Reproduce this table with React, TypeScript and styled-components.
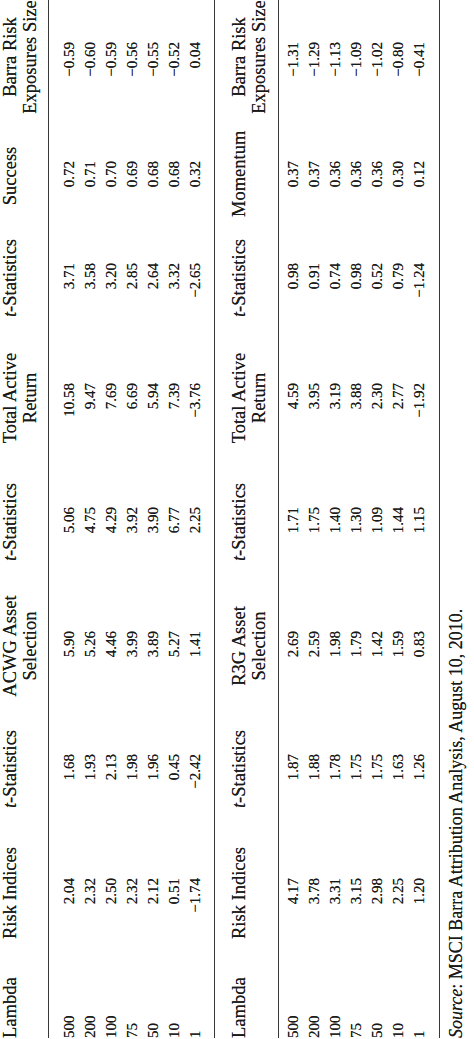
import React from "react";
import styled, { createGlobalStyle } from "styled-components";

const GlobalStyle = createGlobalStyle`
  html, body {
    margin: 0;
    padding: 0;
    background: #fff;
  }
`;

const Page = styled.div`
  width: 474px;
  height: 1039px;
  overflow: hidden;
  background: #fff;
`;

// the printed table sits sideways on the page: lay it out upright, then turn it
const Sheet = styled.div`
  width: 1080px;
  transform-origin: 0 0;
  transform: translate(-2px, 1038px) rotate(-90deg);
  font-family: "Liberation Serif", "Times New Roman", serif;
  color: #1a1a1a;
  text-shadow: 0 0 0.4px #444;
`;

const COLS = "85px 120px 128px 118px 130px 118px 122px 82px 156px";

const Band = styled.div<{ $top: number; $bottom: number }>`
  display: grid;
  grid-template-columns: ${COLS};
  grid-auto-rows: auto;
  padding: ${(p) => p.$top}px 0 ${(p) => p.$bottom}px;
  border-bottom: 1.5px solid #383838;
`;

const Head = styled.div<{ $left?: boolean }>`
  font-size: 18.5px;
  line-height: 20px;
  white-space: nowrap;
  text-align: ${(p) => (p.$left ? "left" : "center")};
`;

const Cell = styled.div<{ $left?: boolean }>`
  font-size: 15px;
  line-height: 21px;
  white-space: nowrap;
  display: flex;
  justify-content: ${(p) => (p.$left ? "flex-start" : "center")};
`;

const Num = styled.span`
  display: flex;
  justify-content: flex-end;
  width: 30px;
`;

const Source = styled.p`
  margin: 0;
  padding-top: 5px;
  font-size: 18px;
  line-height: 22px;
  white-space: nowrap;
`;

const TStat = () => (
  <>
    <i>t</i>-Statistics
  </>
);

type Row = [string, ...string[]];

const panelOne: Row[] = [
  ["500", "2.04", "1.68", "5.90", "5.06", "10.58", "3.71", "0.72", "−0.59"],
  ["200", "2.32", "1.93", "5.26", "4.75", "9.47", "3.58", "0.71", "−0.60"],
  ["100", "2.50", "2.13", "4.46", "4.29", "7.69", "3.20", "0.70", "−0.59"],
  ["75", "2.32", "1.98", "3.99", "3.92", "6.69", "2.85", "0.69", "−0.56"],
  ["50", "2.12", "1.96", "3.89", "3.90", "5.94", "2.64", "0.68", "−0.55"],
  ["10", "0.51", "0.45", "5.27", "6.77", "7.39", "3.32", "0.68", "−0.52"],
  ["1", "−1.74", "−2.42", "1.41", "2.25", "−3.76", "−2.65", "0.32", "0.04"],
];

const panelTwo: Row[] = [
  ["500", "4.17", "1.87", "2.69", "1.71", "4.59", "0.98", "0.37", "−1.31"],
  ["200", "3.78", "1.88", "2.59", "1.75", "3.95", "0.91", "0.37", "−1.29"],
  ["100", "3.31", "1.78", "1.98", "1.40", "3.19", "0.74", "0.36", "−1.13"],
  ["75", "3.15", "1.75", "1.79", "1.30", "3.88", "0.98", "0.36", "−1.09"],
  ["50", "2.98", "1.75", "1.42", "1.09", "2.30", "0.52", "0.36", "−1.02"],
  ["10", "2.25", "1.63", "1.59", "1.44", "2.77", "0.79", "0.30", "−0.80"],
  ["1", "1.20", "1.26", "0.83", "1.15", "−1.92", "−1.24", "0.12", "−0.41"],
];

const Header = ({
  selection,
  factor,
  top,
  bottom,
}: {
  selection: string;
  factor: string;
  top: number;
  bottom: number;
}) => (
  <Band $top={top} $bottom={bottom}>
    <Head $left>Lambda</Head>
    <Head>Risk Indices</Head>
    <Head>
      <TStat />
    </Head>
    <Head>
      {selection} Asset
      <br />
      Selection
    </Head>
    <Head>
      <TStat />
    </Head>
    <Head>
      Total Active
      <br />
      Return
    </Head>
    <Head>
      <TStat />
    </Head>
    <Head>{factor}</Head>
    <Head>
      Barra Risk
      <br />
      Exposures Size
    </Head>
  </Band>
);

const Body = ({ rows, top, bottom }: { rows: Row[]; top: number; bottom: number }) => (
  <Band $top={top} $bottom={bottom}>
    {rows.map(([lambda, ...values]) => (
      <React.Fragment key={lambda}>
        <Cell $left>{lambda}</Cell>
        {values.map((v, i) => (
          <Cell key={i}>
            <Num>{v}</Num>
          </Cell>
        ))}
      </React.Fragment>
    ))}
  </Band>
);

export default function App() {
  return (
    <Page>
      <GlobalStyle />
      <Sheet>
        <Header selection="ACWG" factor="Success" top={1.5} bottom={8.5} />
        <Body rows={panelOne} top={9.5} bottom={8.5} />
        <Header selection="R3G" factor="Momentum" top={14} bottom={8.5} />
        <Body rows={panelTwo} top={4.5} bottom={9} />
        <Source>
          <i>Source</i>: MSCI Barra Attribution Analysis, August 10, 2010.
        </Source>
      </Sheet>
    </Page>
  );
}
